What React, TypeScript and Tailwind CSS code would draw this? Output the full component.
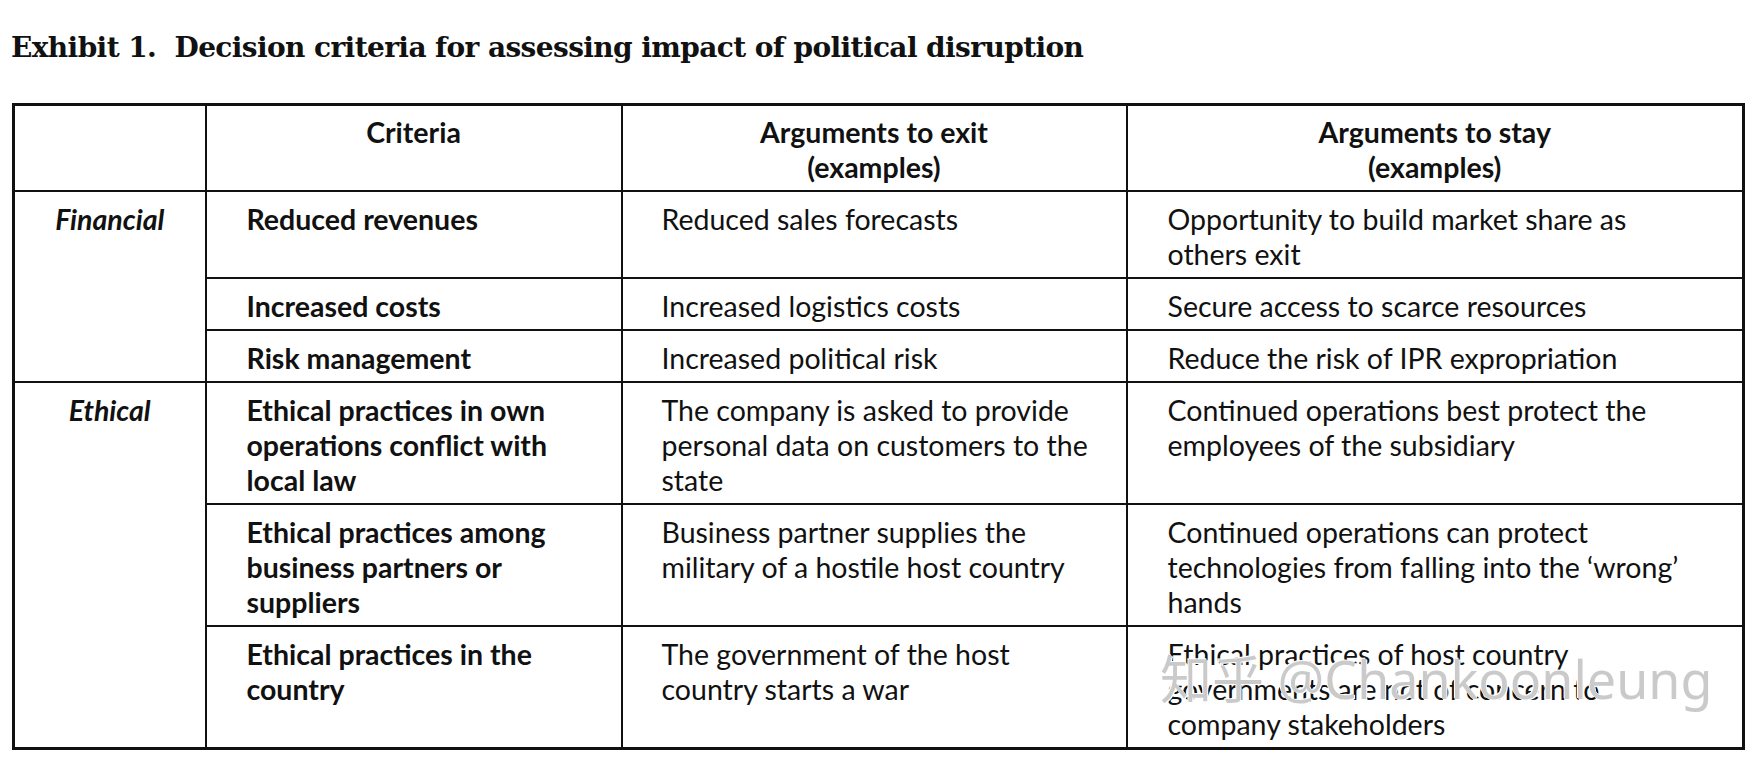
const body = "font-['Lato','Open_Sans',sans-serif]";

type Row = {
  group?: string;
  span?: number;
  criteria: string[];
  exit: string[];
  stay: string[];
};

const ROWS: Row[] = [
  {
    group: "Financial",
    span: 3,
    criteria: ["Reduced revenues"],
    exit: ["Reduced sales forecasts"],
    stay: ["Opportunity to build market share as", "others exit"],
  },
  {
    criteria: ["Increased costs"],
    exit: ["Increased logistics costs"],
    stay: ["Secure access to scarce resources"],
  },
  {
    criteria: ["Risk management"],
    exit: ["Increased political risk"],
    stay: ["Reduce the risk of IPR expropriation"],
  },
  {
    group: "Ethical",
    span: 3,
    criteria: ["Ethical practices in own", "operations conflict with", "local law"],
    exit: ["The company is asked to provide", "personal data on customers to the", "state"],
    stay: ["Continued operations best protect the", "employees of the subsidiary"],
  },
  {
    criteria: ["Ethical practices among", "business partners or", "suppliers"],
    exit: ["Business partner supplies the", "military of a hostile host country"],
    stay: ["Continued operations can protect", "technologies from falling into the \u2018wrong\u2019", "hands"],
  },
  {
    criteria: ["Ethical practices in the", "country"],
    exit: ["The government of the host", "country starts a war"],
    stay: ["Ethical practices of host country", "governments are not of concern to", "company stakeholders"],
  },
];

function Lines({ lines }: { lines: string[] }) {
  return (
    <>
      {lines.map((l, i) => (
        <div key={i} className="whitespace-nowrap">
          {l}
        </div>
      ))}
    </>
  );
}

const head = "border-2 border-[#111] align-top pt-[9px] pb-[5px] text-center font-bold";
const cell = "border-2 border-[#111] align-top pt-[10px] pb-[5px]";

export default function App() {
  return (
    <div className="relative min-h-[758px] w-[1756px] bg-white text-[#111]">
      <h1 className="pl-[11px] pt-[30px] font-['DejaVu_Serif',serif] text-[28px] font-bold leading-[36px] tracking-[-0.6px]">
        Exhibit 1.&nbsp; Decision criteria for assessing impact of political disruption
      </h1>

      <div className="pl-[12px] pt-[37px]">
        <table className={`w-[1730px] table-fixed border-[3px] border-[#111] ${body} text-[28.5px] leading-[35px]`}>
          <colgroup>
            <col className="w-[192px]" />
            <col className="w-[416px]" />
            <col className="w-[505px]" />
            <col className="w-[617px]" />
          </colgroup>
          <thead>
            <tr>
              <th className={head}></th>
              <th className={head}>Criteria</th>
              <th className={head}>
                <div>Arguments to exit</div>
                <div>(examples)</div>
              </th>
              <th className={head}>
                <div>Arguments to stay</div>
                <div>(examples)</div>
              </th>
            </tr>
          </thead>
          <tbody>
            {ROWS.map((r, i) => (
              <tr key={i}>
                {r.group && (
                  <td rowSpan={r.span} className={`${cell} text-center font-bold italic`}>
                    {r.group}
                  </td>
                )}
                <td className={`${cell} pl-[40px] font-bold`}>
                  <Lines lines={r.criteria} />
                </td>
                <td className={`${cell} pl-[39px]`}>
                  <Lines lines={r.exit} />
                </td>
                <td className={`${cell} pl-[40px]`}>
                  <Lines lines={r.stay} />
                </td>
              </tr>
            ))}
          </tbody>
        </table>
      </div>

      {/* watermark over the last cell */}
      <div className="pointer-events-none absolute left-[1160px] top-[649px] font-['Noto_Sans','Noto_Sans_CJK_SC',sans-serif] text-[52px] leading-[60px] text-[#bdbdbd]/80 [text-shadow:1px_1px_0_#fff,-1px_-1px_0_#fff]">
        知乎 @Chankoonleung
      </div>
    </div>
  );
}
